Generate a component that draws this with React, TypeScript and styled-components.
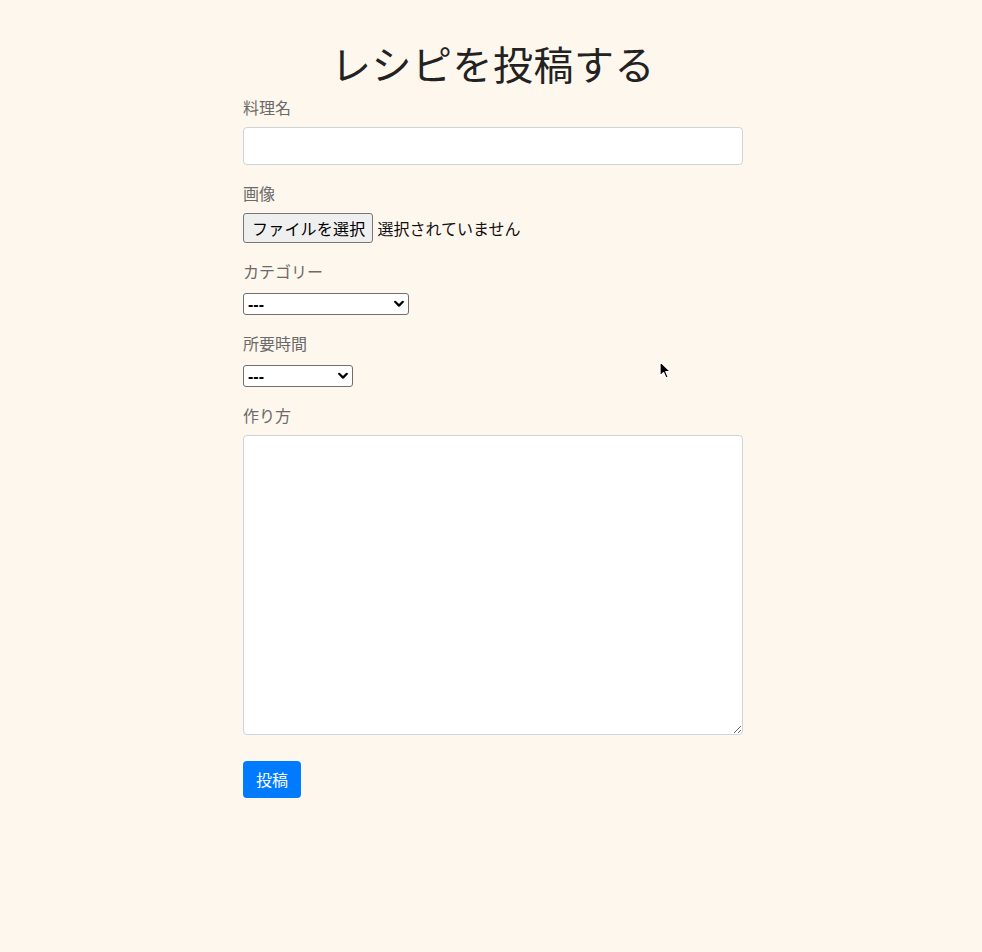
import React from "react";
import styled, { createGlobalStyle } from "styled-components";

const Global = createGlobalStyle`
  html, body { margin: 0; padding: 0; }
  body {
    background: #fef7ee;
    font-family: "Noto Sans CJK JP", "Noto Sans", sans-serif;
    color: #212529;
    min-height: 952px;
  }
  * { box-sizing: border-box; }
`;

const Page = styled.div`
  width: 500px;
  margin: 0 calc(50% - 252px) 0 calc(50% - 248px);
  padding-top: 39px;
`;

const Title = styled.h1`
  margin: 0 0 8px;
  text-align: center;
  font-size: 40px;
  line-height: 48px;
  font-weight: 400;
  color: #222;
  letter-spacing: 0.5px;
`;

const Group = styled.div<{ $gap?: number }>`
  margin-bottom: ${(p) => p.$gap ?? 16}px;
`;

const Label = styled.label`
  display: block;
  font-size: 16px;
  line-height: 24px;
  margin-bottom: 8px;
  color: #6a6a6a;
`;

const TextInput = styled.input`
  display: block;
  width: 100%;
  height: 38px;
  margin-top: 1px;
  border: 1px solid #ced4da;
  border-radius: 4px;
  background: #fff;
  padding: 6px 12px;
  font-size: 16px;
  outline: none;
`;

const FileRow = styled.div`
  display: flex;
  align-items: center;
  gap: 4px;
  height: 30px;
`;

const FileButton = styled.button`
  height: 30px;
  padding: 0 7px 0 8px;
  border: 1px solid #767676;
  border-radius: 3px;
  background: #efefef;
  color: #000;
  font-family: "Noto Sans CJK JP", sans-serif;
  font-size: 16px;
  line-height: 28px;
  letter-spacing: 0.2px;
`;

const FileText = styled.span`
  font-size: 16px;
  color: #111;
`;

const SelectLine = styled.div`
  display: flex;
  align-items: flex-start;
  height: 24px;
  padding-top: 2px;
`;

const SelectWrap = styled.div<{ $w: number }>`
  position: relative;
  width: ${(p) => p.$w}px;
  height: 22px;
`;

const Select = styled.select`
  appearance: none;
  -webkit-appearance: none;
  display: block;
  width: 100%;
  height: 22px;
  margin: 0;
  border: 1px solid #6f6f6f;
  border-radius: 3px;
  background: #fff;
  padding: 0 20px 0 4px;
  font-family: "Liberation Sans", Arial, sans-serif;
  font-size: 16px;
  font-weight: 700;
  color: #000;
  outline: none;
`;

const Chevron = styled.svg`
  position: absolute;
  right: 5px;
  top: 7px;
  width: 10px;
  height: 8px;
  pointer-events: none;
`;

const TextArea = styled.textarea`
  display: block;
  width: 100%;
  height: 300px;
  margin-top: 3px;
  border: 1px solid #ced4da;
  border-radius: 4px;
  background: #fff;
  padding: 6px 12px;
  font-size: 16px;
  outline: none;
`;

const Submit = styled.button`
  height: 37px;
  width: 58px;
  border: none;
  border-radius: 4px;
  background: #007bff;
  color: #fff;
  font-family: "Noto Sans CJK JP", sans-serif;
  font-size: 16px;
  line-height: 37px;
  padding: 0;
`;

const Cursor = styled.svg`
  position: absolute;
  left: 658px;
  top: 360px;
  width: 14px;
  height: 20px;
`;

function Dropdown({ width }: { width: number }) {
  return (
    <SelectLine>
      <SelectWrap $w={width}>
        <Select defaultValue="">
          <option value="">---</option>
        </Select>
        <Chevron viewBox="0 0 10 8">
          <path d="M1.2 1.8 L5 5.6 L8.8 1.8" fill="none" stroke="#000" strokeWidth="2.2" strokeLinecap="round" strokeLinejoin="round" />
        </Chevron>
      </SelectWrap>
    </SelectLine>
  );
}

export default function App() {
  return (
    <>
      <Global />
      <Page>
        <Title>レシピを投稿する</Title>
        <Group>
          <Label>料理名</Label>
          <TextInput type="text" />
        </Group>
        <Group>
          <Label>画像</Label>
          <FileRow>
            <FileButton type="button">ファイルを選択</FileButton>
            <FileText>選択されていません</FileText>
          </FileRow>
        </Group>
        <Group>
          <Label>カテゴリー</Label>
          <Dropdown width={166} />
        </Group>
        <Group>
          <Label>所要時間</Label>
          <Dropdown width={110} />
        </Group>
        <Group $gap={26}>
          <Label>作り方</Label>
          <TextArea />
        </Group>
        <Submit type="button">投稿</Submit>
      </Page>
      <Cursor viewBox="0 0 14 20">
        <path d="M2 1.5 L2 16 L5.5 12.6 L8 18.2 L10.3 17.2 L7.9 11.7 L12.6 11.7 Z" fill="#000" stroke="#fff" strokeWidth="1.3" strokeLinejoin="round" />
      </Cursor>
    </>
  );
}
